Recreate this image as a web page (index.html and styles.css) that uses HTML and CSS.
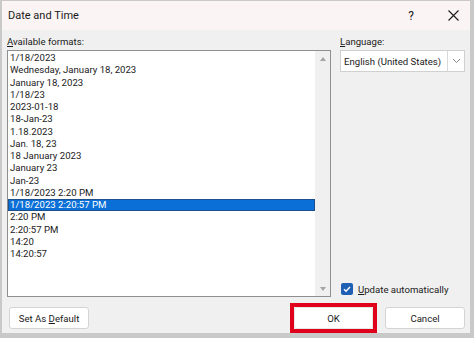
FILE: index.html
```html
<!DOCTYPE html>
<html lang="en">

<head>
  <meta charset="UTF-8">
  <title>Date and Time</title>
  <link rel="stylesheet" href="styles.css">
</head>

<body>
  <div class="dialog">
    <div class="titlebar">
      <span class="title">Date and Time</span>
      <span class="help">?</span>
      <span class="close">
        <svg width="11" height="11" viewBox="0 0 11 11"><path d="M0.5 0.5l10 10M10.5 0.5l-10 10" stroke="#1a1a1a" stroke-width="1.1"/></svg>
      </span>
    </div>
    <div class="content">
      <div class="formats">
        <label class="caption"><u>A</u>vailable formats:</label>
        <div class="listbox">
          <ul class="items">
            <li>1/18/2023</li>
            <li>Wednesday, January 18, 2023</li>
            <li>January 18, 2023</li>
            <li>1/18/23</li>
            <li>2023-01-18</li>
            <li>18-Jan-23</li>
            <li>1.18.2023</li>
            <li>Jan. 18, 23</li>
            <li>18 January 2023</li>
            <li>January 23</li>
            <li>Jan-23</li>
            <li>1/18/2023 2:20 PM</li>
            <li class="selected">1/18/2023 2:20:57 PM</li>
            <li>2:20 PM</li>
            <li>2:20:57 PM</li>
            <li>14:20</li>
            <li>14:20:57</li>
          </ul>
          <div class="scrollbar">
            <span class="arrow up"></span>
            <span class="arrow down"></span>
          </div>
        </div>
      </div>
      <div class="side">
        <label class="caption"><u>L</u>anguage:</label>
        <div class="select">
          <span class="select-text">English (United States)</span>
          <span class="select-btn">
            <svg width="9" height="6" viewBox="0 0 9 6"><path d="M1 1l3.5 3.5L8 1" fill="none" stroke="#8a8a8a" stroke-width="1"/></svg>
          </span>
        </div>
        <div class="check">
          <span class="box">
            <svg width="10" height="10" viewBox="0 0 10 10"><path d="M2 5.2l2 2L8 3" fill="none" stroke="#fff" stroke-width="1.4"/></svg>
          </span>
          <span><u>U</u>pdate automatically</span>
        </div>
      </div>
    </div>
    <div class="buttons">
      <button class="btn">Set As <u>D</u>efault</button>
      <div class="right-buttons">
        <div class="highlight"><button class="btn ok">OK</button></div>
        <button class="btn">Cancel</button>
      </div>
    </div>
  </div>
</body>

</html>
```

FILE: styles.css
```css
body {
  margin: 0;
  width: 474px;
  height: 338px;
  background-color: #c9c9c9;
  font-family: Roboto, 'Noto Sans', sans-serif;
  font-size: 9.6px;
  color: #1a1a1a;
  overflow: hidden;
}

.dialog {
  margin: 1px 4px 0 2px;
  height: 332px;
  background-color: #f0f0f0;
  display: flex;
  flex-direction: column;
}

.titlebar {
  flex-shrink: 0;
  height: 29px;
  background-color: #fbf4f4;
  display: flex;
  align-items: center;
  padding-left: 6px;
  font-size: 11px;
}

.title {
  flex: 1;
}

.help {
  width: 20px;
  text-align: center;
  margin-right: 22px;
  font-size: 12px;
}

.close {
  width: 20px;
  display: flex;
  justify-content: center;
  margin-right: 7px;
}

.content {
  flex-shrink: 0;
  display: flex;
  padding: 5px 5px 0 5px;
  gap: 9px;
}

.caption {
  display: block;
  height: 15px;
  line-height: 14px;
}

.formats {
  width: 324px;
}

.listbox {
  height: 245px;
  border: 1px solid #8f8f8f;
  background-color: #fff;
  display: flex;
}

.items {
  list-style: none;
  margin: 0;
  padding: 1px 0 0;
  flex: 1;
}

.items li {
  height: 12.25px;
  line-height: 12.25px;
  padding-left: 2px;
  white-space: nowrap;
}

.items li.selected {
  background-color: #0a6fd6;
  color: #fff;
  box-shadow: inset 0 0 0 1px #1d4f8c;
}

.scrollbar {
  width: 15px;
  background-color: #f0f0f0;
  display: flex;
  flex-direction: column;
  justify-content: space-between;
  align-items: center;
  padding: 6px 0 5px;
}

.arrow {
  width: 0;
  height: 0;
  border-left: 3.5px solid transparent;
  border-right: 3.5px solid transparent;
}

.arrow.up {
  border-bottom: 4px solid #a3a3a3;
}

.arrow.down {
  border-top: 4px solid #a3a3a3;
}

.side {
  width: 125px;
  display: flex;
  flex-direction: column;
}

.select {
  height: 20px;
  border: 1px solid #d0d0d0;
  background-color: #fff;
  display: flex;
  align-items: center;
  white-space: nowrap;
}

.select-text {
  flex: 1;
  padding-left: 3px;
}

.select-btn {
  width: 16px;
  height: 20px;
  border-left: 1px solid #d8d8d8;
  display: flex;
  align-items: center;
  justify-content: center;
}

.check {
  margin-top: auto;
  margin-bottom: 2px;
  display: flex;
  align-items: center;
  gap: 5px;
  padding-left: 1px;
}

.check .box {
  width: 12px;
  height: 12px;
  border-radius: 2px;
  background-color: #1f5fb4;
  display: flex;
  align-items: center;
  justify-content: center;
}

.buttons {
  flex-shrink: 0;
  display: flex;
  justify-content: space-between;
  align-items: center;
  padding: 6px 5px 0 7px;
}

.right-buttons {
  display: flex;
  align-items: center;
  gap: 8px;
}

.highlight {
  border: 4px solid #e0001b;
  background-color: #f0f0f0;
}

.btn {
  height: 22px;
  width: 80px;
  border: 1px solid #d4d4d4;
  border-radius: 3px;
  background-color: #fff;
  font-family: inherit;
  font-size: 9.6px;
  color: #1a1a1a;
  padding: 0;
}

.btn.ok {
  width: 79px;
  border-color: #e6e6e6;
  display: block;
}
```
